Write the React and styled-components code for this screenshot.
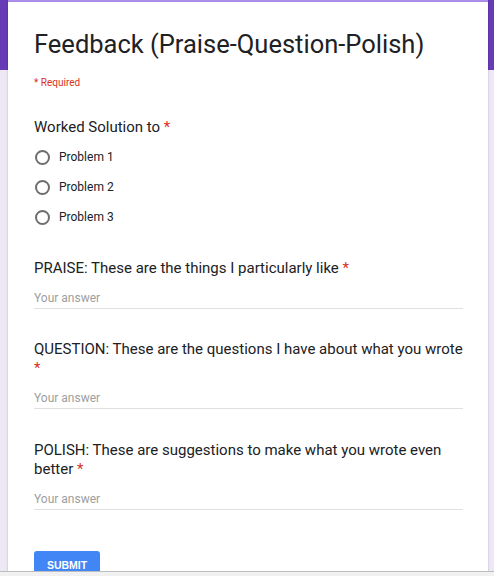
import React from 'react';
import styled, { createGlobalStyle } from 'styled-components';

const GlobalStyle = createGlobalStyle`
  html, body {
    margin: 0;
    padding: 0;
  }
  body {
    font-family: Roboto, "Liberation Sans", Arial, sans-serif;
    color: #202124;
  }
`;

const Page = styled.div`
  height: 576px;
  display: flex;
  flex-direction: column;
  overflow: hidden;
  background: linear-gradient(#673ab7 0, #673ab7 70px, #ede7f6 70px);
`;

const Viewport = styled.div`
  flex: 1;
  min-height: 0;
  overflow: hidden;
  padding: 0 6px 0 8px;
`;

const WindowEdge = styled.div`
  height: 4px;
  flex-shrink: 0;
  border-top: 1px solid #bdbdbd;
  background: #f1f1f1;
`;

const Card = styled.form`
  background: #fff;
  border-top: 2px solid #a98de8;
  box-shadow: 0 0 2px rgba(0, 0, 0, 0.22);
  padding: 26px 25px 40px 26px;
  min-height: 100%;
  box-sizing: border-box;
`;

const Title = styled.h1`
  margin: 0;
  font-size: 25.5px;
  line-height: 32px;
  font-weight: 400;
  color: #202124;
`;

const RequiredNote = styled.div`
  margin-top: 16px;
  font-size: 10px;
  line-height: 14px;
  color: #d93025;
`;

const Question = styled.fieldset`
  border: 0;
  margin: ${(p) => p.$top}px 0 0;
  padding: 0;
  min-width: 0;
`;

const Label = styled.legend`
  padding: 0;
  font-size: 15px;
  line-height: 19px;
  color: #202124;
`;

const Star = styled.span`
  color: #d93025;
`;

const Options = styled.div`
  display: flex;
  flex-direction: column;
  margin-top: 5px;
`;

const Option = styled.label`
  display: flex;
  align-items: center;
  gap: 9px;
  height: 30px;
  font-size: 12px;
  color: #202124;
  cursor: pointer;
`;

const RadioCircle = styled.span`
  width: 15px;
  height: 15px;
  box-sizing: border-box;
  border: 2px solid #6e6e6e;
  border-radius: 50%;
  margin-left: 1px;
  flex-shrink: 0;
`;

const Answer = styled.input`
  display: block;
  width: 100%;
  box-sizing: border-box;
  margin-top: 10px;
  height: 21px;
  padding: 0;
  border: 0;
  border-bottom: 1px solid #e0e0e0;
  font-family: Roboto, "Liberation Sans", Arial, sans-serif;
  font-size: 12px;
  line-height: 20px;
  color: #202124;
  outline: none;
  background: transparent;

  &::placeholder {
    color: #9e9e9e;
  }
`;

const SubmitButton = styled.button`
  margin-top: 41px;
  width: 66px;
  height: 36px;
  padding: 0;
  border: 0;
  border-radius: 3px;
  background: #4285f4;
  color: #fff;
  font-family: "Liberation Sans", Arial, sans-serif;
  font-weight: 700;
  font-size: 10.5px;
  line-height: 28px;
  text-align: center;
  display: flex;
  justify-content: center;
  align-items: flex-start;
`;

const problems = ['Problem 1', 'Problem 2', 'Problem 3'];

const textQuestions = [
  { label: 'PRAISE: These are the things I particularly like', top: 27 },
  { label: 'QUESTION: These are the questions I have about what you wrote', top: 31 },
  { label: 'POLISH: These are suggestions to make what you wrote even better', top: 32 },
];

function App() {
  return (
    <>
      <GlobalStyle />
      <Page>
        <Viewport>
          <Card onSubmit={(e) => e.preventDefault()}>
            <Title>Feedback (Praise-Question-Polish)</Title>
            <RequiredNote>* Required</RequiredNote>

            <Question $top={28}>
              <Label>
                Worked Solution to <Star>*</Star>
              </Label>
              <Options>
                {problems.map((p) => (
                  <Option key={p}>
                    <RadioCircle />
                    {p}
                  </Option>
                ))}
              </Options>
            </Question>

            {textQuestions.map((q) => (
              <Question key={q.label} $top={q.top}>
                <Label>
                  {q.label} <Star>*</Star>
                </Label>
                <Answer placeholder="Your answer" />
              </Question>
            ))}

            <SubmitButton type="submit">SUBMIT</SubmitButton>
          </Card>
        </Viewport>
        <WindowEdge />
      </Page>
    </>
  );
}

export default App;
